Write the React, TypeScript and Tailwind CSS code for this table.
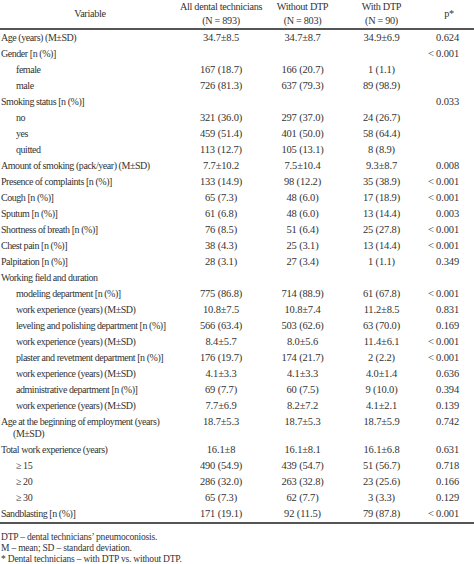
import React from 'react';

type Row = {
  label: string;
  indent?: boolean;
  all?: string;
  without?: string;
  withDtp?: string;
  p?: string;
  tall?: boolean;
};

const rows: Row[] = [
  { label: 'Age (years) (M±SD)', all: '34.7±8.5', without: '34.7±8.7', withDtp: '34.9±6.9', p: '0.624' },
  { label: 'Gender [n (%)]', p: '< 0.001' },
  { label: 'female', indent: true, all: '167 (18.7)', without: '166 (20.7)', withDtp: '1 (1.1)' },
  { label: 'male', indent: true, all: '726 (81.3)', without: '637 (79.3)', withDtp: '89 (98.9)' },
  { label: 'Smoking status [n (%)]', p: '0.033' },
  { label: 'no', indent: true, all: '321 (36.0)', without: '297 (37.0)', withDtp: '24 (26.7)' },
  { label: 'yes', indent: true, all: '459 (51.4)', without: '401 (50.0)', withDtp: '58 (64.4)' },
  { label: 'quitted', indent: true, all: '113 (12.7)', without: '105 (13.1)', withDtp: '8 (8.9)' },
  { label: 'Amount of smoking (pack/year) (M±SD)', all: '7.7±10.2', without: '7.5±10.4', withDtp: '9.3±8.7', p: '0.008' },
  { label: 'Presence of complaints [n (%)]', all: '133 (14.9)', without: '98 (12.2)', withDtp: '35 (38.9)', p: '< 0.001' },
  { label: 'Cough [n (%)]', all: '65 (7.3)', without: '48 (6.0)', withDtp: '17 (18.9)', p: '< 0.001' },
  { label: 'Sputum [n (%)]', all: '61 (6.8)', without: '48 (6.0)', withDtp: '13 (14.4)', p: '0.003' },
  { label: 'Shortness of breath [n (%)]', all: '76 (8.5)', without: '51 (6.4)', withDtp: '25 (27.8)', p: '< 0.001' },
  { label: 'Chest pain [n (%)]', all: '38 (4.3)', without: '25 (3.1)', withDtp: '13 (14.4)', p: '< 0.001' },
  { label: 'Palpitation [n (%)]', all: '28 (3.1)', without: '27 (3.4)', withDtp: '1 (1.1)', p: '0.349' },
  { label: 'Working field and duration' },
  { label: 'modeling department [n (%)]', indent: true, all: '775 (86.8)', without: '714 (88.9)', withDtp: '61 (67.8)', p: '< 0.001' },
  { label: 'work experience (years) (M±SD)', indent: true, all: '10.8±7.5', without: '10.8±7.4', withDtp: '11.2±8.5', p: '0.831' },
  { label: 'leveling and polishing department [n (%)]', indent: true, all: '566 (63.4)', without: '503 (62.6)', withDtp: '63 (70.0)', p: '0.169' },
  { label: 'work experience (years) (M±SD)', indent: true, all: '8.4±5.7', without: '8.0±5.6', withDtp: '11.4±6.1', p: '< 0.001' },
  { label: 'plaster and revetment department [n (%)]', indent: true, all: '176 (19.7)', without: '174 (21.7)', withDtp: '2 (2.2)', p: '< 0.001' },
  { label: 'work experience (years) (M±SD)', indent: true, all: '4.1±3.3', without: '4.1±3.3', withDtp: '4.0±1.4', p: '0.636' },
  { label: 'administrative department [n (%)]', indent: true, all: '69 (7.7)', without: '60 (7.5)', withDtp: '9 (10.0)', p: '0.394' },
  { label: 'work experience (years) (M±SD)', indent: true, all: '7.7±6.9', without: '8.2±7.2', withDtp: '4.1±2.1', p: '0.139' },
  { label: 'Age at the beginning of employment (years)', tall: true, all: '18.7±5.3', without: '18.7±5.3', withDtp: '18.7±5.9', p: '0.742' },
  { label: 'Total work experience (years)', all: '16.1±8', without: '16.1±8.1', withDtp: '16.1±6.8', p: '0.631' },
  { label: '≥ 15', indent: true, all: '490 (54.9)', without: '439 (54.7)', withDtp: '51 (56.7)', p: '0.718' },
  { label: '≥ 20', indent: true, all: '286 (32.0)', without: '263 (32.8)', withDtp: '23 (25.6)', p: '0.166' },
  { label: '≥ 30', indent: true, all: '65 (7.3)', without: '62 (7.7)', withDtp: '3 (3.3)', p: '0.129' },
  { label: 'Sandblasting [n (%)]', all: '171 (19.1)', without: '92 (11.5)', withDtp: '79 (87.8)', p: '< 0.001' },
];

// columns: variable | all | without DTP | with DTP | p
const cols = 'grid grid-cols-[180px_82px_81px_77px_54px]';

export default function App() {
  return (
    <div className="w-[474px] h-[564px] overflow-hidden bg-white text-[#333] font-['Liberation_Serif',serif] text-[10.5px]">
      <div
        className={`${cols} h-[28px] items-center text-center text-[10.2px] tracking-[-0.3px] leading-[14px] border-b-2 border-[#555] box-content`}
      >
        <div>Variable</div>
        <div className="whitespace-nowrap">
          All dental technicians
          <br />
          (N = 893)
        </div>
        <div>
          Without DTP
          <br />
          (N = 803)
        </div>
        <div>
          With DTP
          <br />
          (N = 90)
        </div>
        <div className="pl-[4px]">p*</div>
      </div>

      <div className="border-b-2 border-[#555]">
        {rows.map((row, i) => (
          <div
            key={i}
            className={`${cols} leading-[12px] py-[2px] whitespace-nowrap tracking-[-0.15px]`}
          >
            <div
              className={`text-[10px] tracking-[-0.45px] ${row.indent ? 'pl-[16px]' : 'pl-[1px]'}`}
            >
              {row.label}
              {row.tall && (
                <>
                  <br />
                  <span className="pl-[12px]">(M±SD)</span>
                </>
              )}
            </div>
            <div className="text-center">{row.all}</div>
            <div className="text-center">{row.without}</div>
            <div className="text-center">{row.withDtp}</div>
            <div className="text-right pr-[15px]">{row.p}</div>
          </div>
        ))}
      </div>

      <div className="mt-[8px] pl-[1px] text-[9.5px] leading-[11px] tracking-[-0.2px]">
        <p>DTP – dental technicians’ pneumoconiosis.</p>
        <p>M – mean; SD – standard deviation.</p>
        <p>* Dental technicians – with DTP vs. without DTP.</p>
      </div>
    </div>
  );
}
